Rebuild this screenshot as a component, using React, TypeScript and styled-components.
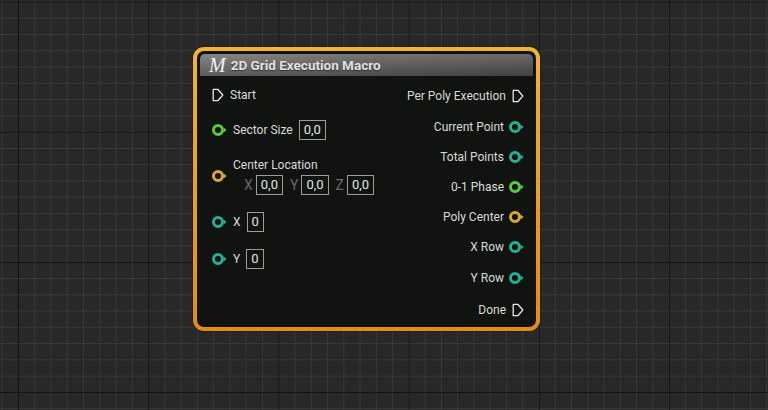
import React from "react";
import styled, { createGlobalStyle } from "styled-components";

const GlobalStyle = createGlobalStyle`
  html, body { margin: 0; padding: 0; }
  body {
    width: 768px;
    height: 410px;
    overflow: hidden;
    background: #262626;
    font-family: Roboto, "Liberation Sans", sans-serif;
  }
`;

const Canvas = styled.div`
  position: relative;
  width: 768px;
  height: 410px;
  overflow: hidden;
  background-color: #282828;
  background-image:
    linear-gradient(to right, #131313 1px, transparent 1px),
    linear-gradient(to bottom, #131313 1px, transparent 1px),
    linear-gradient(to right, #383838 1px, transparent 1px),
    linear-gradient(to bottom, #383838 1px, transparent 1px);
  background-size:
    130.2px 130.2px,
    130.2px 130.2px,
    16.275px 16.275px,
    16.275px 16.275px;
  background-position:
    18px 1.5px,
    18px 1.5px,
    18px 1.5px,
    18px 1.5px;
`;

const Selection = styled.div`
  position: absolute;
  left: 193px;
  top: 47px;
  width: 347px;
  height: 284px;
  box-sizing: border-box;
  padding: 4px;
  border-radius: 11px;
  background: linear-gradient(to bottom, #f2b433, #eb9a22 60%, #e58a17);
  box-shadow: 0 0 2px rgba(0, 0, 0, 0.6);
`;

const NodeShell = styled.div`
  height: 100%;
  box-sizing: border-box;
  padding: 3px;
  border-radius: 7px;
  background: #111310;
  display: flex;
  flex-direction: column;
`;

const Header = styled.div`
  height: 22px;
  flex: none;
  display: flex;
  align-items: center;
  gap: 5px;
  padding-left: 9px;
  border-radius: 5px 5px 0 0;
  background:
    linear-gradient(to bottom, rgba(255, 255, 255, 0.12), rgba(0, 0, 0, 0.22)),
    linear-gradient(to right, #767676, #626262 50%, #545454);
`;

const MacroGlyph = styled.span`
  font-family: "Liberation Serif", "DejaVu Serif", serif;
  font-style: italic;
  font-weight: normal;
  font-size: 20px;
  line-height: 18px;
  color: #f2f2f2;
`;

const Title = styled.span`
  font-family: Roboto, "Liberation Sans", sans-serif;
  font-weight: bold;
  font-size: 13.5px;
  color: #e2e2e2;
  text-shadow: 0 1px 1px rgba(0, 0, 0, 0.5);
`;

const Body = styled.div`
  flex: 1;
  display: flex;
  justify-content: space-between;
  padding: 4px 9px 0 12px;
`;

const Column = styled.div<{ $align: "start" | "end" }>`
  display: flex;
  flex-direction: column;
  align-items: ${(p) => (p.$align === "start" ? "flex-start" : "flex-end")};
`;

const PinRow = styled.div<{ $h: number; $gap: number }>`
  height: ${(p) => p.$h}px;
  display: flex;
  align-items: center;
  gap: ${(p) => p.$gap}px;
`;

const Label = styled.span`
  font-size: 12px;
  color: #dadada;
  white-space: nowrap;
`;

const Stack = styled.div`
  display: flex;
  flex-direction: column;
  gap: 3px;
`;

const StackLabel = styled(Label)`
  line-height: 14px;
`;

const VectorRow = styled.div`
  display: flex;
  align-items: center;
  gap: 7px;
  margin-left: 11px;
`;

const Axis = styled.div`
  display: flex;
  align-items: center;
  gap: 3px;
`;

const AxisLetter = styled.span`
  font-size: 14px;
  color: #6a6a6a;
  line-height: 20px;
`;

const ValueBox = styled.span`
  display: inline-block;
  box-sizing: border-box;
  height: 20px;
  line-height: 18px;
  padding: 0 4px;
  border: 1px solid #9c9c9c;
  font-size: 13px;
  color: #e4e4e4;
`;

const PinSvg = styled.svg`
  display: block;
  flex: none;
`;

const DataPin = ({ color }: { color: string }) => (
  <PinSvg width="15" height="12" viewBox="0 0 15 12">
    <circle cx="6" cy="6" r="4.5" fill="#0c0d0c" stroke={color} strokeWidth="3" />
    <polygon points="11.6,3.6 14.6,6 11.6,8.4" fill={color} />
  </PinSvg>
);

const ExecPin = () => (
  <PinSvg width="12" height="14" viewBox="0 0 12 14">
    <path
      d="M1.2 1.3 H5.8 L10.8 7 L5.8 12.7 H1.2 Z"
      fill="none"
      stroke="#e6e6e6"
      strokeWidth="1.3"
      strokeLinejoin="round"
    />
  </PinSvg>
);

const TEAL = "#22b196";
const GREEN = "#5ccb39";
const GOLD = "#d6aa2e";

const outputs: { label: string; color?: string; h: number }[] = [
  { label: "Per Poly Execution", h: 32 },
  { label: "Current Point", color: TEAL, h: 30 },
  { label: "Total Points", color: TEAL, h: 30 },
  { label: "0-1 Phase", color: GREEN, h: 30 },
  { label: "Poly Center", color: GOLD, h: 30 },
  { label: "X Row", color: TEAL, h: 30 },
  { label: "Y Row", color: TEAL, h: 32 },
  { label: "Done", h: 31 },
];

export default function App() {
  return (
    <>
      <GlobalStyle />
      <Canvas>
        <Selection>
          <NodeShell>
            <Header>
              <MacroGlyph>M</MacroGlyph>
              <Title>2D Grid Execution Macro</Title>
            </Header>
            <Body>
              <Column $align="start">
                <PinRow $h={30} $gap={6}>
                  <ExecPin />
                  <Label>Start</Label>
                </PinRow>
                <PinRow $h={40} $gap={6}>
                  <DataPin color={GREEN} />
                  <Label>Sector Size</Label>
                  <ValueBox>0,0</ValueBox>
                </PinRow>
                <PinRow $h={52} $gap={6}>
                  <DataPin color={GOLD} />
                  <Stack>
                    <StackLabel>Center Location</StackLabel>
                    <VectorRow>
                      <Axis>
                        <AxisLetter>X</AxisLetter>
                        <ValueBox>0,0</ValueBox>
                      </Axis>
                      <Axis>
                        <AxisLetter>Y</AxisLetter>
                        <ValueBox>0,0</ValueBox>
                      </Axis>
                      <Axis>
                        <AxisLetter>Z</AxisLetter>
                        <ValueBox>0,0</ValueBox>
                      </Axis>
                    </VectorRow>
                  </Stack>
                </PinRow>
                <PinRow $h={40} $gap={6}>
                  <DataPin color={TEAL} />
                  <Label>X</Label>
                  <ValueBox>0</ValueBox>
                </PinRow>
                <PinRow $h={34} $gap={6}>
                  <DataPin color={TEAL} />
                  <Label>Y</Label>
                  <ValueBox>0</ValueBox>
                </PinRow>
              </Column>
              <Column $align="end">
                {outputs.map((o) => (
                  <PinRow key={o.label} $h={o.h} $gap={o.color ? 5 : 6}>
                    <Label>{o.label}</Label>
                    {o.color ? <DataPin color={o.color} /> : <ExecPin />}
                  </PinRow>
                ))}
              </Column>
            </Body>
          </NodeShell>
        </Selection>
      </Canvas>
    </>
  );
}
